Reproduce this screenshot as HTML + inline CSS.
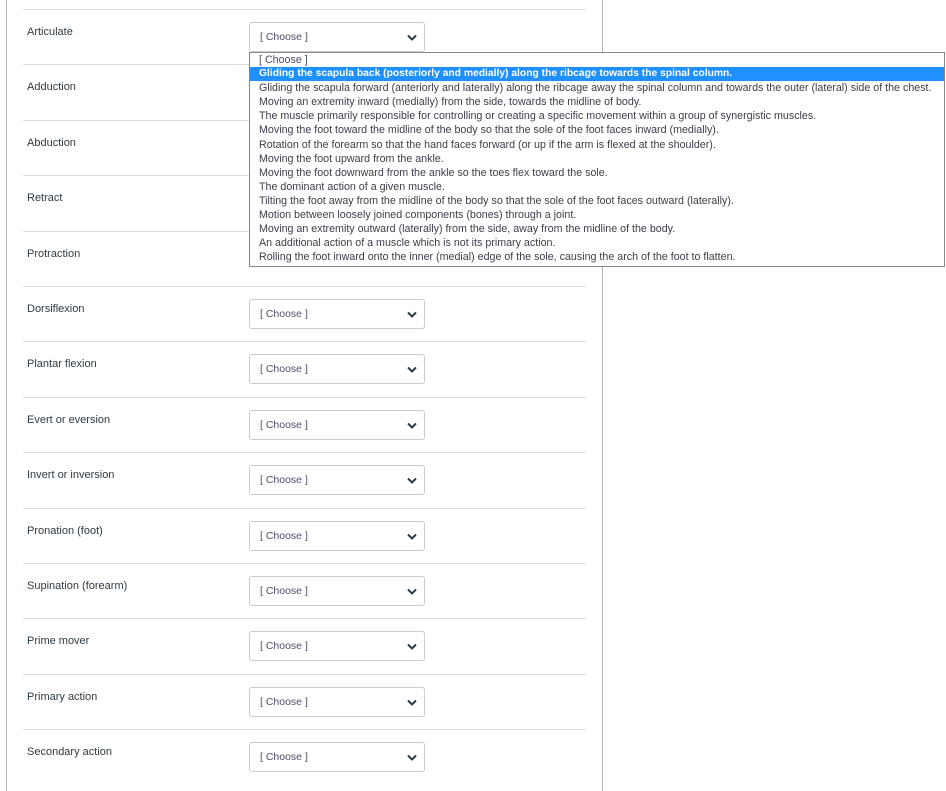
<!DOCTYPE html>
<html><head><meta charset="utf-8"><style>
body{margin:0;width:946px;height:791px;background:#fff;position:relative;overflow:hidden;font-family:"Liberation Sans",sans-serif;}
.b{position:absolute;background:#b5b5b5;width:1px;top:0;height:791px}
.ln{position:absolute;left:23px;width:563px;height:1px;background:#dcdcdc}
.lb{position:absolute;left:27px;font-size:11px;color:#2d3b45}
.sel{position:absolute;left:249px;width:174px;height:28px;border:1px solid #c7cdd1;border-radius:3px;background:#fff;box-sizing:content-box}
.sel span{position:absolute;left:10px;top:8px;font-size:10.5px;color:#4b4f6b}
.sel svg{position:absolute;right:7px;top:11px}
.dd{position:absolute;left:249px;top:52px;width:694px;height:213px;border:1px solid #888;background:#fff;font-size:10.7px;color:#3a3f4a;overflow:hidden}
.dd div{height:14.1px;line-height:14.4px;padding-left:9px;white-space:nowrap}
.dd .h{background:#1e90ff;color:#fff;font-weight:bold;font-size:10.3px}
</style></head><body>
<div class="b" style="left:6px"></div>
<div class="b" style="left:602px"></div>
<div id="rows"></div>
<script>
var labels=["Articulate","Adduction","Abduction","Retract","Protraction","Dorsiflexion","Plantar flexion","Evert or eversion","Invert or inversion","Pronation (foot)","Supination (forearm)","Prime mover","Primary action","Secondary action"];
var h="";
for(var i=0;i<14;i++){var y=Math.round(9+55.4*i);
h+='<div class="ln" style="top:'+y+'px"></div>';
h+='<div class="lb" style="top:'+(y+17)+'px">'+labels[i]+'</div>';
if(i==0||i>=5)h+='<div class="sel" style="top:'+(y+13)+'px"><span>[ Choose ]</span><svg width="10" height="7" viewBox="0 0 10 7"><path d="M1 1.5L5 5.5L9 1.5" fill="none" stroke="#2d3b45" stroke-width="2"/></svg></div>';}
document.getElementById("rows").innerHTML=h;
</script>
<div class="sel" style="top:230px;height:14px;border-top:none"></div>
<div class="dd">
<div style="color:#4b4f6b">[ Choose ]</div>
<div class="h">Gliding the scapula back (posteriorly and medially) along the ribcage towards the spinal column.</div>
<div>Gliding the scapula forward (anteriorly and laterally) along the ribcage away the spinal column and towards the outer (lateral) side of the chest.</div>
<div>Moving an extremity inward (medially) from the side, towards the midline of body.</div>
<div>The muscle primarily responsible for controlling or creating a specific movement within a group of synergistic muscles.</div>
<div>Moving the foot toward the midline of the body so that the sole of the foot faces inward (medially).</div>
<div>Rotation of the forearm so that the hand faces forward (or up if the arm is flexed at the shoulder).</div>
<div>Moving the foot upward from the ankle.</div>
<div>Moving the foot downward from the ankle so the toes flex toward the sole.</div>
<div>The dominant action of a given muscle.</div>
<div>Tilting the foot away from the midline of the body so that the sole of the foot faces outward (laterally).</div>
<div>Motion between loosely joined components (bones) through a joint.</div>
<div>Moving an extremity outward (laterally) from the side, away from the midline of the body.</div>
<div>An additional action of a muscle which is not its primary action.</div>
<div>Rolling the foot inward onto the inner (medial) edge of the sole, causing the arch of the foot to flatten.</div>
</div>
</body></html>
